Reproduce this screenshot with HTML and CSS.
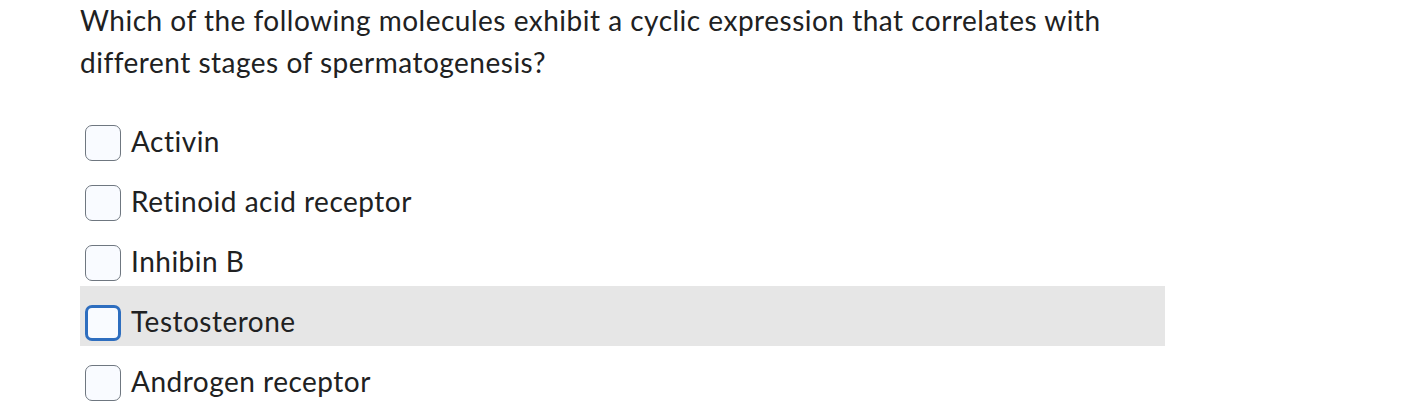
FILE: index.html
```html
<!DOCTYPE html>
<html>
<head>
<meta charset="utf-8">
<link rel="stylesheet" href="styles.css">
</head>
<body>
<div class="question">
  <p class="prompt">Which of the following molecules exhibit a cyclic expression that correlates with different stages of spermatogenesis?</p>
  <ul class="options">
    <li class="option"><span class="box"></span><span class="label">Activin</span></li>
    <li class="option"><span class="box"></span><span class="label">Retinoid acid receptor</span></li>
    <li class="option"><span class="box"></span><span class="label">Inhibin B</span></li>
    <li class="option hover"><span class="box focus"></span><span class="label">Testosterone</span></li>
    <li class="option"><span class="box"></span><span class="label">Androgen receptor</span></li>
  </ul>
</div>
</body>
</html>
```
FILE: styles.css
```css
html, body {
  margin: 0;
  padding: 0;
  background: #ffffff;
}
body {
  font-family: Lato, "Noto Sans", sans-serif;
  color: #202122;
  letter-spacing: 0.5px;
}
.question {
  padding-left: 80px;
  width: 1085px;
}
.prompt {
  margin: -1px 0 0;
  font-size: 28px;
  line-height: 42px;
  width: 1060px;
}
.options {
  list-style: none;
  margin: 23px 0 0;
  padding: 0;
}
.option {
  height: 60px;
  box-sizing: border-box;
  padding: 19px 0 5px 5px;
  display: flex;
  align-items: center;
  gap: 10px;
}
.option.hover {
  background: #e6e6e6;
}
.box {
  width: 36px;
  height: 36px;
  box-sizing: border-box;
  border: 1px solid #6f7780;
  border-radius: 7px;
  background: #f9fbff;
  flex: none;
}
.box.focus {
  border: 3px solid #2e6ebf;
}
.label {
  font-size: 28px;
  line-height: 36px;
  padding-bottom: 5px;
}
```
